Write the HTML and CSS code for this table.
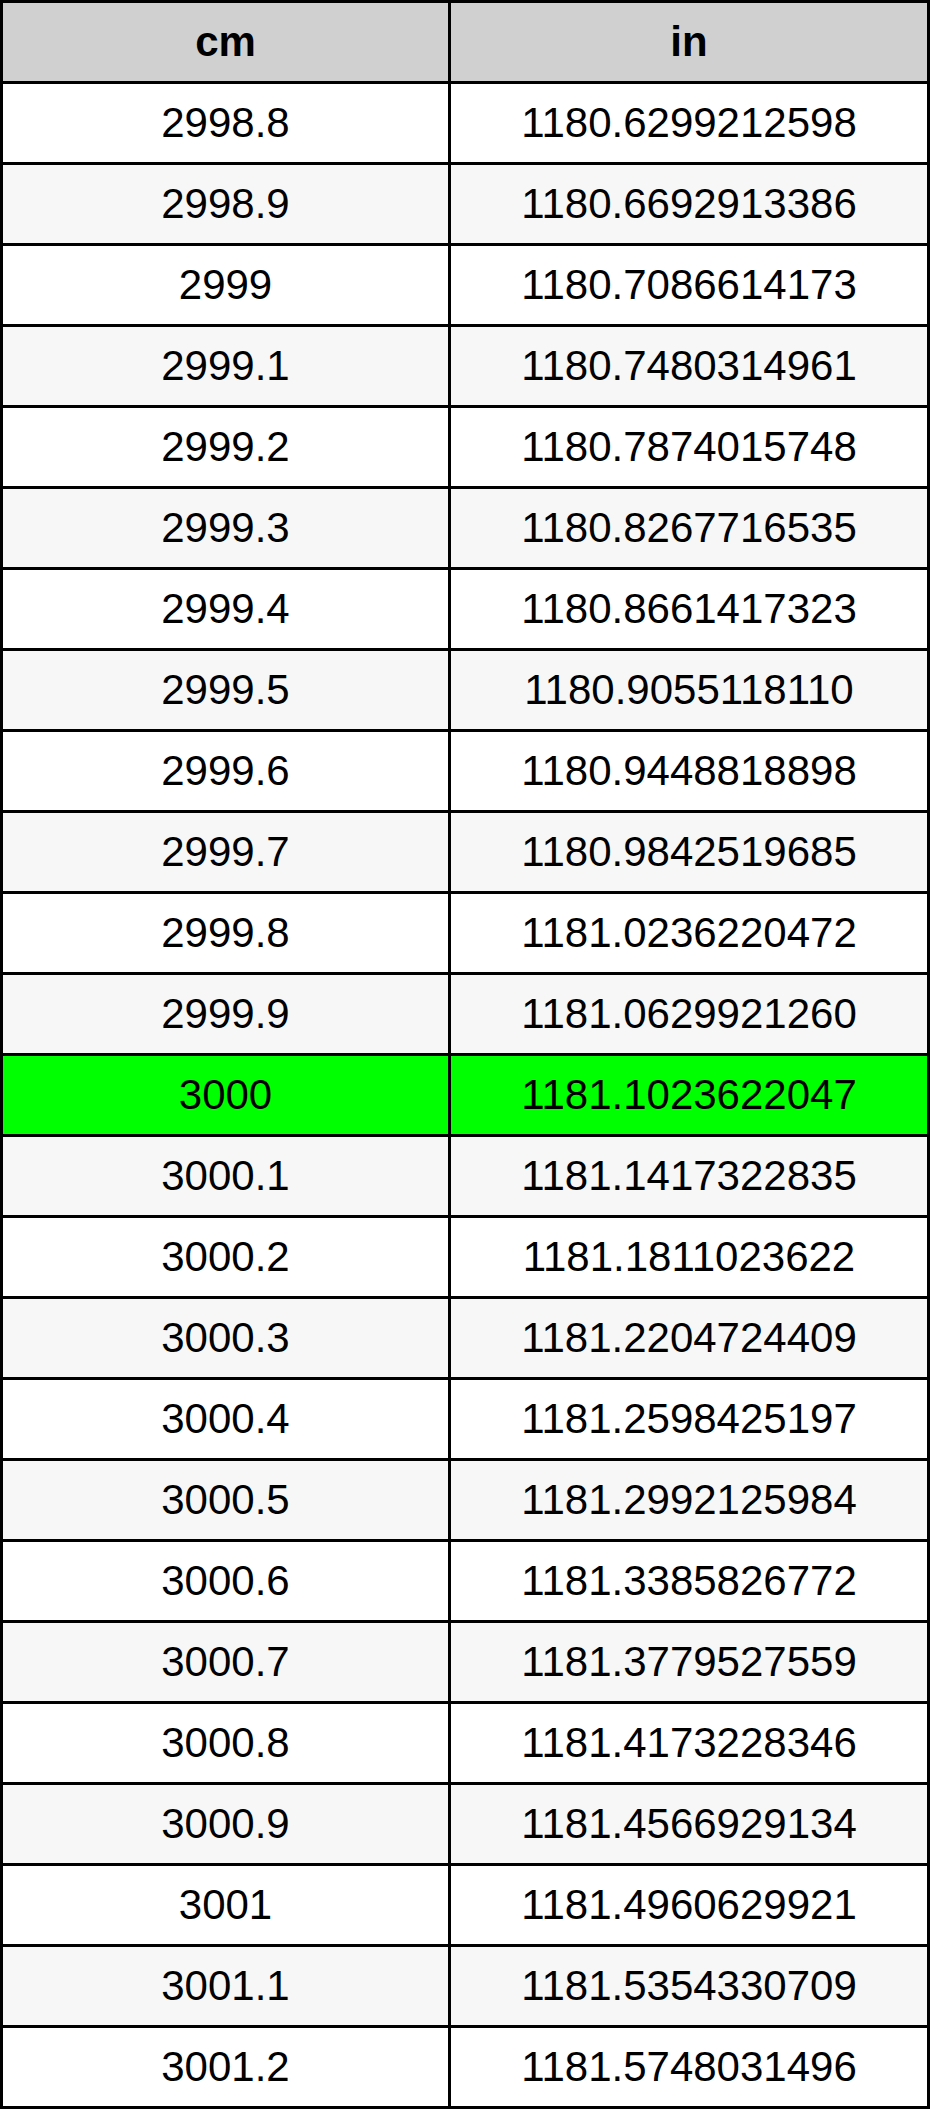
FILE: index.html
```html
<!DOCTYPE html>
<html>
<head>
<meta charset="utf-8">
<link rel="stylesheet" href="styles.css">
</head>
<body>
<table class="conv">
<colgroup><col class="c1"><col class="c2"></colgroup>
<thead><tr><th>cm</th><th>in</th></tr></thead>
<tbody>
<tr><td>2998.8</td><td>1180.6299212598</td></tr>
<tr><td>2998.9</td><td>1180.6692913386</td></tr>
<tr><td>2999</td><td>1180.7086614173</td></tr>
<tr><td>2999.1</td><td>1180.7480314961</td></tr>
<tr><td>2999.2</td><td>1180.7874015748</td></tr>
<tr><td>2999.3</td><td>1180.8267716535</td></tr>
<tr><td>2999.4</td><td>1180.8661417323</td></tr>
<tr><td>2999.5</td><td>1180.9055118110</td></tr>
<tr><td>2999.6</td><td>1180.9448818898</td></tr>
<tr><td>2999.7</td><td>1180.9842519685</td></tr>
<tr><td>2999.8</td><td>1181.0236220472</td></tr>
<tr><td>2999.9</td><td>1181.0629921260</td></tr>
<tr class="hl"><td>3000</td><td>1181.1023622047</td></tr>
<tr><td>3000.1</td><td>1181.1417322835</td></tr>
<tr><td>3000.2</td><td>1181.1811023622</td></tr>
<tr><td>3000.3</td><td>1181.2204724409</td></tr>
<tr><td>3000.4</td><td>1181.2598425197</td></tr>
<tr><td>3000.5</td><td>1181.2992125984</td></tr>
<tr><td>3000.6</td><td>1181.3385826772</td></tr>
<tr><td>3000.7</td><td>1181.3779527559</td></tr>
<tr><td>3000.8</td><td>1181.4173228346</td></tr>
<tr><td>3000.9</td><td>1181.4566929134</td></tr>
<tr><td>3001</td><td>1181.4960629921</td></tr>
<tr><td>3001.1</td><td>1181.5354330709</td></tr>
<tr><td>3001.2</td><td>1181.5748031496</td></tr>
</tbody>
</table>
</body>
</html>
```
FILE: styles.css
```css
html, body {
  margin: 0;
  padding: 0;
  background: #ffffff;
}
.conv {
  width: 930px;
  table-layout: fixed;
  border-collapse: separate;
  border-spacing: 3px;
  background: #000000;
  font-family: "Liberation Sans", Arial, sans-serif;
  color: #000000;
}
.conv .c1 { width: 445px; }
.conv .c2 { width: 476px; }
.conv th, .conv td {
  height: 78px;
  padding: 0;
  text-align: center;
  vertical-align: middle;
  font-size: 42px;
  line-height: 78px;
}
.conv th {
  background: #d0d0d0;
  font-weight: bold;
}
.conv tbody tr:nth-child(odd) td { background: #ffffff; }
.conv tbody tr:nth-child(even) td { background: #f7f7f7; }
.conv tbody tr.hl td { background: #00ff00; }
```
